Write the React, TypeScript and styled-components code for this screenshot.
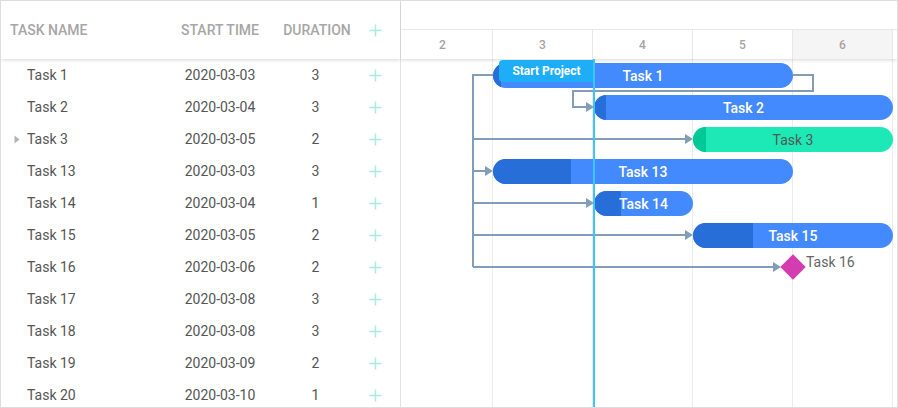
import React from 'react';
import styled, { createGlobalStyle } from 'styled-components';

const Global = createGlobalStyle`
  html, body { margin: 0; padding: 0; background: #fff; }
  body { font-family: Roboto, "Liberation Sans", Arial, sans-serif; }
  * { box-sizing: border-box; }
`;

type Task = { id: number; name: string; start: string; duration: number; parent?: boolean };

const rows: Task[] = [
  { id: 1, name: 'Task 1', start: '2020-03-03', duration: 3 },
  { id: 2, name: 'Task 2', start: '2020-03-04', duration: 3 },
  { id: 3, name: 'Task 3', start: '2020-03-05', duration: 2, parent: true },
  { id: 13, name: 'Task 13', start: '2020-03-03', duration: 3 },
  { id: 14, name: 'Task 14', start: '2020-03-04', duration: 1 },
  { id: 15, name: 'Task 15', start: '2020-03-05', duration: 2 },
  { id: 16, name: 'Task 16', start: '2020-03-06', duration: 2 },
  { id: 17, name: 'Task 17', start: '2020-03-08', duration: 3 },
  { id: 18, name: 'Task 18', start: '2020-03-08', duration: 3 },
  { id: 19, name: 'Task 19', start: '2020-03-09', duration: 2 },
  { id: 20, name: 'Task 20', start: '2020-03-10', duration: 1 },
];

type Bar = { row: number; left: number; width: number; progress: number; label: string; kind: 'blue' | 'green' };
const bars: Bar[] = [
  { row: 0, left: 92, width: 300, progress: 8, label: 'Task 1', kind: 'blue' },
  { row: 1, left: 193, width: 299, progress: 12, label: 'Task 2', kind: 'blue' },
  { row: 2, left: 292, width: 200, progress: 13, label: 'Task 3', kind: 'green' },
  { row: 3, left: 92, width: 300, progress: 78, label: 'Task 13', kind: 'blue' },
  { row: 4, left: 193, width: 99, progress: 27, label: 'Task 14', kind: 'blue' },
  { row: 5, left: 292, width: 200, progress: 60, label: 'Task 15', kind: 'blue' },
];

const days = [
  { n: 2, hi: false, show: true },
  { n: 3, hi: false, show: true },
  { n: 4, hi: false, show: true },
  { n: 5, hi: false, show: true },
  { n: 6, hi: true, show: true },
  { n: 7, hi: false, show: false },
];

const ROW_H = 32;
const LINK = '#819db8';

const Gantt = styled.div`
  width: 898px;
  height: 408px;
  border: 1px solid #dedede;
  display: flex;
  overflow: hidden;
  background: #fff;
`;

const GridPanel = styled.div`
  width: 400px;
  flex: none;
  border-right: 1px solid #e2e2e2;
  display: flex;
  flex-direction: column;
`;

const cols = '159px 120px 71px 49px';

const GridHeader = styled.div`
  height: 58px;
  flex: none;
  display: grid;
  grid-template-columns: ${cols};
  align-items: center;
  position: relative;
  z-index: 2;
  box-shadow: 0 1px 4px rgba(0, 0, 0, 0.16);
  background: #fff;
`;

const HeadCell = styled.div<{ $left?: boolean; $shift?: number }>`
  font-size: 14px;
  font-weight: 500;
  color: #a6a6a6;
  text-transform: uppercase;
  padding-left: ${(p) => (p.$left ? '9px' : '0')};
  margin-left: ${(p) => p.$shift || 0}px;
  white-space: nowrap;
  display: flex;
  justify-content: ${(p) => (p.$left ? 'flex-start' : 'center')};
`;

const GridBody = styled.div`
  flex: 1;
  overflow: hidden;
`;

const GridRow = styled.div`
  height: ${ROW_H}px;
  display: grid;
  grid-template-columns: ${cols};
  align-items: center;
  font-size: 14px;
  color: #555;
`;

const NameCell = styled.div`
  display: flex;
  align-items: center;
  padding-left: 13px;
`;

const Toggle = styled.span`
  width: 13px;
  display: inline-flex;
  align-items: center;
`;

const Cell = styled.div`
  text-align: center;
`;

const AddCell = styled.div`
  display: flex;
  justify-content: center;
`;

const Timeline = styled.div`
  flex: 1;
  display: flex;
  flex-direction: column;
  overflow: hidden;
`;

const ScaleHeader = styled.div`
  height: 58px;
  flex: none;
  display: flex;
  flex-direction: column;
  position: relative;
  z-index: 2;
  box-shadow: 0 1px 4px rgba(0, 0, 0, 0.16);
  background: #fff;
`;

const MonthRow = styled.div`
  height: 29px;
  border-bottom: 1px solid #e8e8e8;
`;

const DayRow = styled.div`
  height: 29px;
  display: flex;
  margin-left: -8px;
`;

const DayCell = styled.div<{ $hi: boolean }>`
  width: 100px;
  flex: none;
  border-right: 1px solid #e8e8e8;
  background: ${(p) => (p.$hi ? '#f5f5f5' : '#fff')};
  display: flex;
  align-items: center;
  justify-content: center;
  font-size: 12px;
  font-weight: 500;
  color: #a3a3a3;
`;

const Canvas = styled.div`
  flex: 1;
  position: relative;
  overflow: hidden;
`;

const ColLines = styled.div`
  display: flex;
  height: 100%;
  margin-left: -8px;
`;

const ColLine = styled.div`
  width: 100px;
  flex: none;
  border-right: 1px solid #ebebeb;
`;

const Links = styled.svg`
  position: absolute;
  left: 0;
  top: 0;
  width: 100%;
  height: 100%;
`;

const TaskBar = styled.div<{ $kind: 'blue' | 'green' }>`
  position: absolute;
  height: 25px;
  border-radius: 13px;
  overflow: hidden;
  background: ${(p) => (p.$kind === 'green' ? '#1de9b6' : '#448aff')};
  color: ${(p) => (p.$kind === 'green' ? '#555' : '#fff')};
  font-size: 14px;
  display: flex;
  align-items: center;
  justify-content: center;
`;

const Progress = styled.div<{ $kind: 'blue' | 'green' }>`
  position: absolute;
  left: 0;
  top: 0;
  bottom: 0;
  background: ${(p) => (p.$kind === 'green' ? '#00c896' : '#276ed8')};
`;

const BarText = styled.span<{ $kind: 'blue' | 'green' }>`
  position: relative;
  font-weight: ${(p) => (p.$kind === 'green' ? 400 : 500)};
`;

const Milestone = styled.div`
  position: absolute;
  width: 18px;
  height: 18px;
  background: #d33db0;
  transform: translate(-50%, -50%) rotate(45deg);
`;

const MilestoneText = styled.span`
  position: absolute;
  font-size: 14px;
  color: #666;
  white-space: nowrap;
`;

const TodayLine = styled.div`
  position: absolute;
  top: 0;
  bottom: 0;
  width: 2px;
  background: #3ec5f6;
  z-index: 3;
`;

const MarkerLabel = styled.div`
  position: absolute;
  height: 22px;
  background: #1daef7;
  color: #fff;
  font-size: 12px;
  font-weight: 700;
  border-radius: 4px 0 0 4px;
  display: flex;
  align-items: flex-start;
  justify-content: center;
  padding-top: 4px;
  z-index: 3;
`;

const PlusIcon = () => (
  <svg width="13" height="13" viewBox="0 0 13 13">
    <path d="M6.5 0.5V12.5M0.5 6.5H12.5" stroke="#a9ecdf" strokeWidth="1.5" />
  </svg>
);

const Caret = () => (
  <svg width="6" height="9" viewBox="0 0 6 9">
    <path d="M0.5 0.5L5.5 4.5L0.5 8.5Z" fill="#b3b3b3" />
  </svg>
);

const arrow = (x: number, y: number) => `${x},${y} ${x - 8},${y - 5} ${x - 8},${y + 5}`;

const linkArrows = [
  { x: 292, y: 80 },
  { x: 92, y: 112 },
  { x: 193, y: 144 },
  { x: 292, y: 176 },
  { x: 380, y: 208 },
  { x: 193, y: 48 },
];

export default function App() {
  return (
    <>
      <Global />
      <Gantt>
        <GridPanel>
          <GridHeader>
            <HeadCell $left>Task name</HeadCell>
            <HeadCell>Start time</HeadCell>
            <HeadCell $shift={3}>Duration</HeadCell>
            <AddCell>
              <PlusIcon />
            </AddCell>
          </GridHeader>
          <GridBody>
            {rows.map((r) => (
              <GridRow key={r.id}>
                <NameCell>
                  <Toggle>{r.parent ? <Caret /> : null}</Toggle>
                  {r.name}
                </NameCell>
                <Cell>{r.start}</Cell>
                <Cell>{r.duration}</Cell>
                <AddCell>
                  <PlusIcon />
                </AddCell>
              </GridRow>
            ))}
          </GridBody>
        </GridPanel>
        <Timeline>
          <ScaleHeader>
            <MonthRow />
            <DayRow>
              {days.map((d) => (
                <DayCell key={d.n} $hi={d.hi}>
                  {d.show ? d.n : null}
                </DayCell>
              ))}
            </DayRow>
          </ScaleHeader>
          <Canvas>
            <ColLines>
              {days.map((d) => (
                <ColLine key={d.n} />
              ))}
            </ColLines>
            <Links>
              <g stroke={LINK} strokeWidth="2" fill="none">
                <path d="M72 16V208" />
                <path d="M71 16H92" />
                <path d="M72 80H285" />
                <path d="M72 112H85" />
                <path d="M72 144H186" />
                <path d="M72 176H285" />
                <path d="M72 208H373" />
                <path d="M392 16H412V32H172V48H186" />
              </g>
              <g fill={LINK}>
                {linkArrows.map((a, i) => (
                  <polygon key={i} points={arrow(a.x, a.y)} />
                ))}
              </g>
            </Links>
            {bars.map((b) => (
              <TaskBar
                key={b.label}
                $kind={b.kind}
                style={{ left: b.left, width: b.width, top: b.row * ROW_H + 4 }}
              >
                <Progress $kind={b.kind} style={{ width: b.progress }} />
                <BarText $kind={b.kind}>{b.label}</BarText>
              </TaskBar>
            ))}
            <Milestone style={{ left: 392, top: 6 * ROW_H + 16 }} />
            <MilestoneText style={{ left: 405, top: 6 * ROW_H + 3 }}>Task 16</MilestoneText>
            <MarkerLabel style={{ left: 98, top: 1, width: 95 }}>Start Project</MarkerLabel>
            <TodayLine style={{ left: 192 }} />
          </Canvas>
        </Timeline>
      </Gantt>
    </>
  );
}
